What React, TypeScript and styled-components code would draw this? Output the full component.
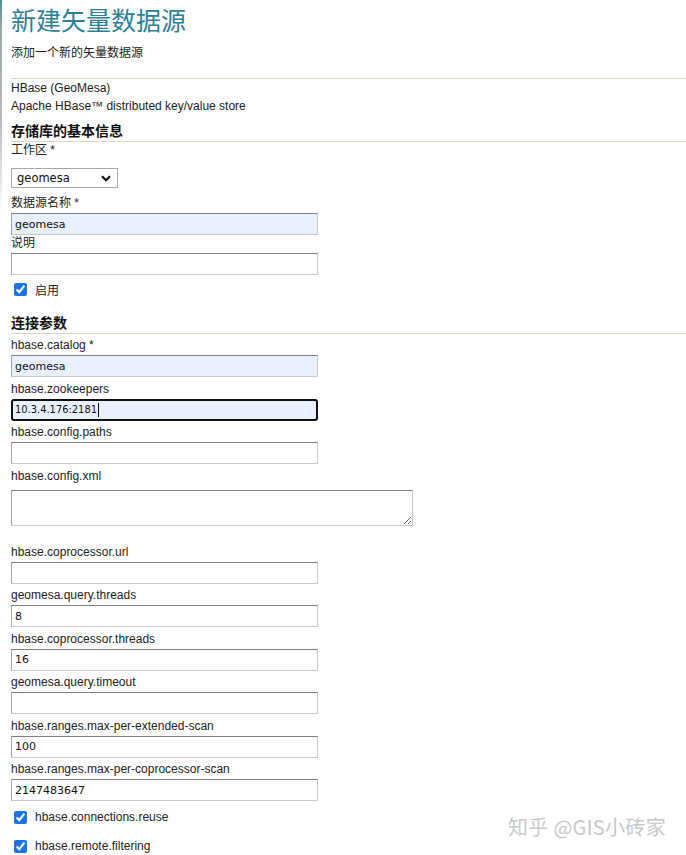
import React from "react";
import styled, { createGlobalStyle } from "styled-components";

const GlobalStyle = createGlobalStyle`
  html, body {
    margin: 0;
    padding: 0;
    background: #ffffff;
  }
  body {
    font-family: "Liberation Sans", "Noto Sans CJK SC", sans-serif;
    font-size: 12px;
    color: #222222;
  }
`;

const Page = styled.div`
  position: relative;
  width: 686px;
  height: 855px;
  overflow: hidden;
  padding-left: 11px;
  box-sizing: border-box;
  &::before {
    content: "";
    position: absolute;
    left: 0;
    top: 0;
    width: 2px;
    height: 215px;
    background: linear-gradient(#4d8f9c 0, #9ca8aa 30px, #b8bcbc 120px, rgba(255, 255, 255, 0) 215px);
  }
`;

const Title = styled.h1`
  margin: 2px 0 0;
  font-size: 25px;
  line-height: 34px;
  font-weight: normal;
  color: #2b7f97;
  font-family: "Noto Sans CJK SC", sans-serif;
`;

const Subtitle = styled.p`
  margin: 9px 0 0;
  line-height: 16px;
  font-size: 12px;
`;

const Divider = styled.div`
  margin-top: 17px;
  border-top: 1px solid #d6d9bd;
`;

const InfoLine = styled.div`
  line-height: 18px;
`;

const SectionHeader = styled.h3<{ $top: number; $bottom: number }>`
  margin: ${(p) => p.$top}px 0 ${(p) => p.$bottom}px;
  padding-bottom: 1px;
  font-size: 14px;
  line-height: 18px;
  font-weight: bold;
  color: #111111;
  border-bottom: 1px solid #d6d9bd;
`;

const Field = styled.div<{ $gap?: number }>`
  display: flex;
  flex-direction: column;
  align-items: flex-start;
  margin-bottom: ${(p) => p.$gap ?? 3.5}px;
`;

const Label = styled.label`
  line-height: 16px;
  font-size: 12px;
  color: #222222;
`;

const TextInput = styled.input<{ $filled?: boolean }>`
  margin-top: 2px;
  width: 307px;
  height: 22px;
  box-sizing: border-box;
  padding: 0 3px;
  font-family: "DejaVu Sans", sans-serif;
  font-size: 11px;
  color: #111111;
  background: ${(p) => (p.$filled ? "#e8f0fe" : "#ffffff")};
  border: 1px solid;
  border-color: #7f7f7f #c9c9c9 #c9c9c9 #a5a5a5;
  border-radius: 0;
  outline: none;
`;

const FocusedBox = styled.div`
  margin-top: 2px;
  width: 307px;
  height: 22px;
  box-sizing: border-box;
  padding: 0 2px;
  display: flex;
  align-items: center;
  font-family: "DejaVu Sans Condensed", "DejaVu Sans", sans-serif;
  font-size: 11px;
  color: #111111;
  background: #e8f0fe;
  border: 2px solid #111111;
  border-radius: 3px;
`;

const Caret = styled.span`
  display: inline-block;
  width: 1px;
  height: 14px;
  margin-left: 1px;
  background: #111111;
`;

const TextArea = styled.textarea`
  margin-top: 6px;
  width: 402px;
  height: 36px;
  box-sizing: border-box;
  font-family: "DejaVu Sans", sans-serif;
  font-size: 11px;
  border: 1px solid;
  border-color: #7f7f7f #c9c9c9 #c9c9c9 #a5a5a5;
  outline: none;
  display: block;
`;

const SelectBox = styled.div`
  margin-top: 10px;
  width: 107px;
  height: 20px;
  box-sizing: border-box;
  border: 1px solid #a9a9a9;
  display: flex;
  align-items: center;
  justify-content: space-between;
  padding: 0 6px 0 5px;
  font-family: "DejaVu Sans", sans-serif;
  font-size: 11.5px;
  color: #111111;
`;

const CheckRow = styled.label<{ $top: number }>`
  display: flex;
  align-items: center;
  gap: 8px;
  margin-top: ${(p) => p.$top}px;
  height: 16px;
  padding-left: 3px;
  font-size: 12px;
  color: #222222;
`;

const Check = styled.input`
  margin: 0;
  width: 13px;
  height: 13px;
  accent-color: #1a73e8;
`;

const Watermark = styled.div`
  position: absolute;
  left: 508px;
  top: 814px;
  font-family: "Noto Sans CJK SC", sans-serif;
  font-size: 20px;
  line-height: 26px;
  letter-spacing: 0.3px;
  color: #c8c8c8;
  text-shadow: 0 0 2px #ffffff, 1px 1px 0 #ffffff;
`;

const Chevron = () => (
  <svg width="10" height="7" viewBox="0 0 10 7">
    <path d="M1 1.2 L5 5.2 L9 1.2" fill="none" stroke="#111" strokeWidth="2.2" />
  </svg>
);

type Param = { label: string; value?: string; filled?: boolean; focused?: boolean };

const PARAMS_TOP: Param[] = [
  { label: "hbase.catalog *", value: "geomesa", filled: true },
  { label: "hbase.zookeepers", value: "10.3.4.176:2181", focused: true },
  { label: "hbase.config.paths" },
];

const PARAMS_BOTTOM: Param[] = [
  { label: "hbase.coprocessor.url" },
  { label: "geomesa.query.threads", value: "8" },
  { label: "hbase.coprocessor.threads", value: "16" },
  { label: "geomesa.query.timeout" },
  { label: "hbase.ranges.max-per-extended-scan", value: "100" },
  { label: "hbase.ranges.max-per-coprocessor-scan", value: "2147483647" },
];

function ParamField({ p }: { p: Param }) {
  return (
    <Field>
      <Label>{p.label}</Label>
      {p.focused ? (
        <FocusedBox>
          {p.value}
          <Caret />
        </FocusedBox>
      ) : (
        <TextInput defaultValue={p.value ?? ""} $filled={p.filled} readOnly />
      )}
    </Field>
  );
}

export default function App() {
  return (
    <Page>
      <GlobalStyle />
      <Title>新建矢量数据源</Title>
      <Subtitle>添加一个新的矢量数据源</Subtitle>
      <Divider />
      <InfoLine>HBase (GeoMesa)</InfoLine>
      <InfoLine>Apache HBase™ distributed key/value store</InfoLine>

      <SectionHeader $top={7} $bottom={0}>存储库的基本信息</SectionHeader>
      <Field $gap={7}>
        <Label>工作区 *</Label>
        <SelectBox>
          <span>geomesa</span>
          <Chevron />
        </SelectBox>
      </Field>
      <Field $gap={0}>
        <Label>数据源名称 *</Label>
        <TextInput defaultValue="geomesa" $filled readOnly />
      </Field>
      <Field $gap={0}>
        <Label>说明</Label>
        <TextInput defaultValue="" readOnly />
      </Field>
      <CheckRow $top={6}>
        <Check type="checkbox" defaultChecked />
        启用
      </CheckRow>

      <SectionHeader $top={17} $bottom={3}>连接参数</SectionHeader>
      {PARAMS_TOP.map((p) => (
        <ParamField key={p.label} p={p} />
      ))}
      <Field $gap={18}>
        <Label>hbase.config.xml</Label>
        <TextArea readOnly />
      </Field>
      {PARAMS_BOTTOM.map((p) => (
        <ParamField key={p.label} p={p} />
      ))}
      <CheckRow $top={8}>
        <Check type="checkbox" defaultChecked />
        hbase.connections.reuse
      </CheckRow>
      <CheckRow $top={13}>
        <Check type="checkbox" defaultChecked />
        hbase.remote.filtering
      </CheckRow>

      <Watermark>知乎 @GIS小砖家</Watermark>
    </Page>
  );
}
